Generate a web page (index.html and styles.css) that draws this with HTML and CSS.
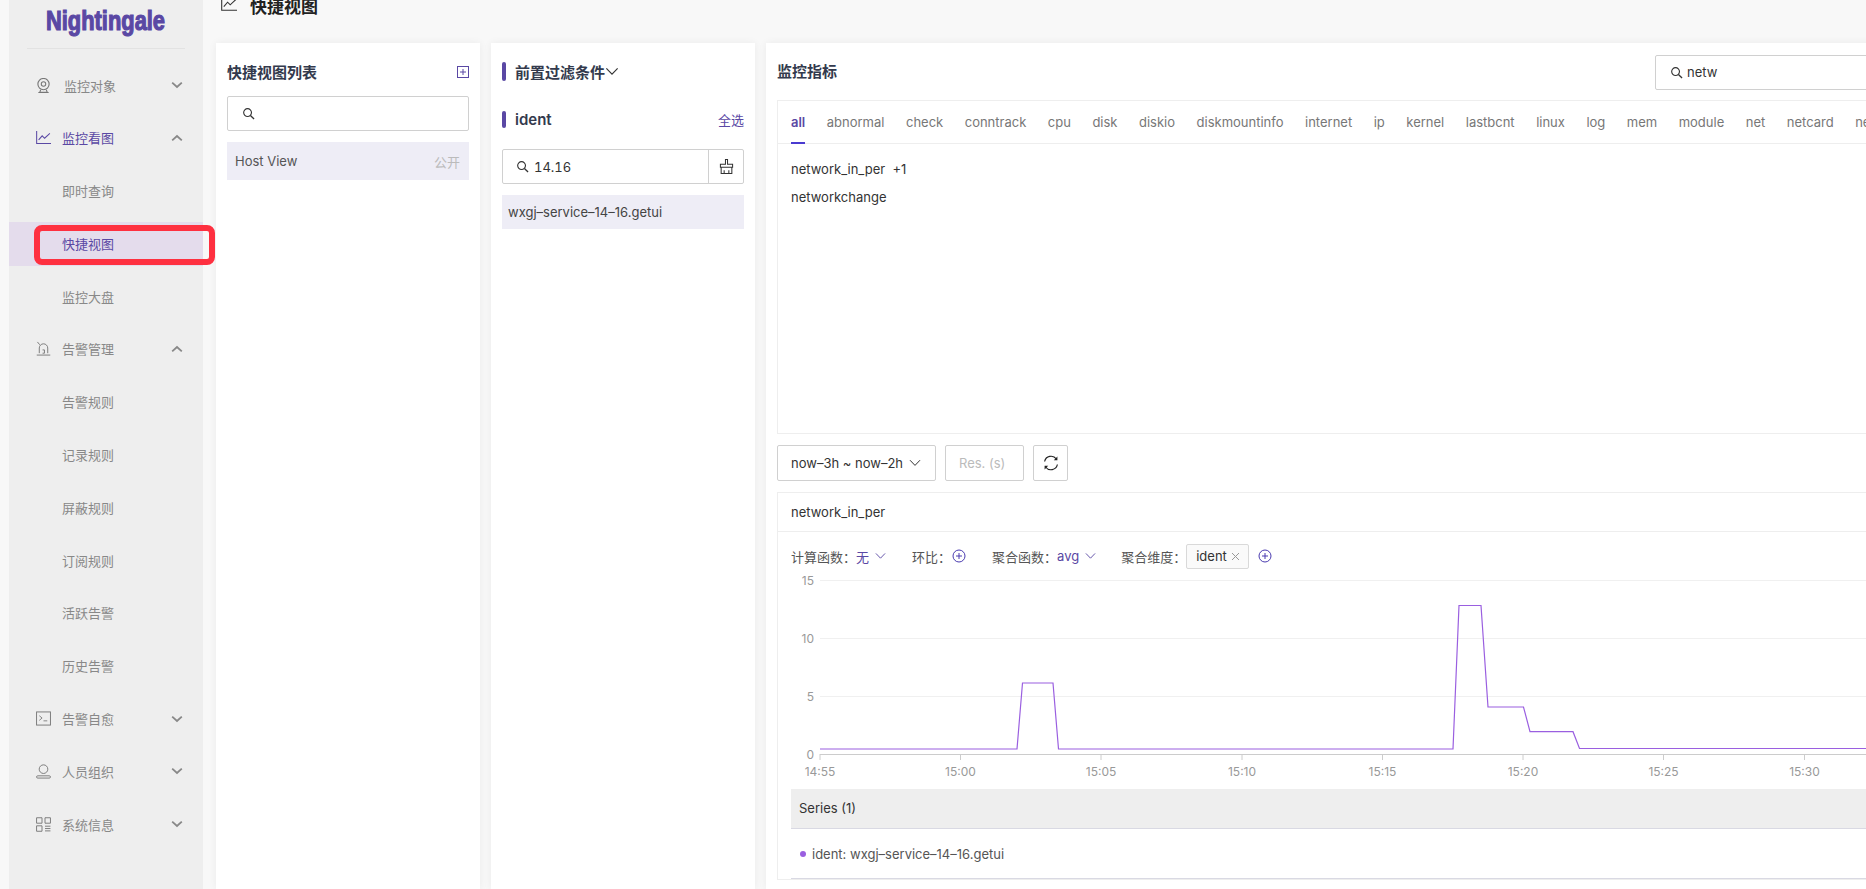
FILE: index.html
```html
<!DOCTYPE html>
<html lang="en">
<head>
    <meta charset="UTF-8">
    <meta name="viewport" content="width=device-width, initial-scale=1.0">
    <title>Nightingale</title>
    <link rel="stylesheet" href="styles.css">
</head>
<body>
    <svg class="sprites" width="0" height="0">
        <symbol id="i-search" viewBox="0 0 14 14"><circle cx="6" cy="6" r="4.2" fill="none" stroke="currentColor" stroke-width="1.2"/><path d="M9.1 9.1 13 13" fill="none" stroke="currentColor" stroke-width="1.4"/></symbol>
        <symbol id="i-down" viewBox="0 0 12 8"><path d="M1 1.2 6 6.4 11 1.2" fill="none" stroke="currentColor" stroke-width="1"/></symbol>
        <symbol id="i-fat-down" viewBox="0 0 12 8"><path d="M1.2 1.6 6 6 10.8 1.6" fill="none" stroke="currentColor" stroke-width="1.8"/></symbol>
        <symbol id="i-fat-up" viewBox="0 0 12 8"><path d="M1.2 6.4 6 2 10.8 6.4" fill="none" stroke="currentColor" stroke-width="1.8"/></symbol>
        <symbol id="i-plus" viewBox="0 0 14 14"><circle cx="7" cy="7" r="6" fill="none" stroke="currentColor"/><path d="M7 4v6M4 7h6" fill="none" stroke="currentColor"/></symbol>
        <symbol id="i-chart" viewBox="0 0 16 14"><path d="M.7 0v13.3H16M2.8 9.6 6.6 5.2l2.6 2.6 5.6-5.2" fill="none" stroke="currentColor" stroke-width="1.1"/></symbol>
    </svg>

    <aside class="sidebar">
        <div class="logo"><span class="logo-text">Nightingale</span></div>
        <nav class="nav">
            <div class="nav-item nav-first">
                <svg class="nav-icon" viewBox="0 0 16 16"><circle cx="8" cy="6.5" r="6" fill="none" stroke="currentColor" stroke-width="1.2"/><circle cx="8" cy="6.5" r="2.4" fill="none" stroke="currentColor" stroke-width="1.1"/><path d="M5 12.5 4 15.3h8L11 12.5M2.5 15.5h11" fill="none" stroke="currentColor" stroke-width="1.1"/></svg>
                <span class="nav-label">监控对象</span>
                <svg class="nav-arrow"><use href="#i-fat-down"/></svg>
            </div>
            <div class="nav-item nav-open">
                <svg class="nav-icon"><use href="#i-chart"/></svg>
                <span class="nav-label">监控看图</span>
                <svg class="nav-arrow"><use href="#i-fat-up"/></svg>
            </div>
            <div class="nav-item nav-sub">即时查询</div>
            <div class="nav-item nav-sub nav-active">快捷视图<div class="callout"></div></div>
            <div class="nav-item nav-sub">监控大盘</div>
            <div class="nav-item">
                <svg class="nav-icon" viewBox="0 0 16 16"><path d="M3.5 13V7.5a4.5 4.5 0 0 1 9 0V13M.8 15h14.4M7 9.5h2V13H7M1.5 1l2.5 3" fill="none" stroke="currentColor" stroke-width="1"/></svg>
                <span class="nav-label">告警管理</span>
                <svg class="nav-arrow"><use href="#i-fat-up"/></svg>
            </div>
            <div class="nav-item nav-sub">告警规则</div>
            <div class="nav-item nav-sub">记录规则</div>
            <div class="nav-item nav-sub">屏蔽规则</div>
            <div class="nav-item nav-sub">订阅规则</div>
            <div class="nav-item nav-sub">活跃告警</div>
            <div class="nav-item nav-sub">历史告警</div>
            <div class="nav-item">
                <svg class="nav-icon" viewBox="0 0 16 16"><rect x=".6" y="1" width="14.8" height="14" fill="none" stroke="currentColor" stroke-width="1"/><path d="M3.5 5 6.5 7.5 3.5 10M8 10.5h4" fill="none" stroke="currentColor" stroke-width=".9"/></svg>
                <span class="nav-label">告警自愈</span>
                <svg class="nav-arrow"><use href="#i-fat-down"/></svg>
            </div>
            <div class="nav-item">
                <svg class="nav-icon" viewBox="0 0 16 16"><circle cx="8" cy="5.5" r="4.6" fill="none" stroke="currentColor" stroke-width="1"/><rect x=".6" y="12.6" width="14.8" height="2.4" rx="1.2" fill="none" stroke="currentColor" stroke-width="1"/></svg>
                <span class="nav-label">人员组织</span>
                <svg class="nav-arrow"><use href="#i-fat-down"/></svg>
            </div>
            <div class="nav-item">
                <svg class="nav-icon" viewBox="0 0 16 16"><path d="M.6.8h5.8v5.8H.6zM9.6.8h5.8v5.8H9.6zM.6 9.4h5.8v5.8H.6zM9.6 9.8h5.8M9.6 12.3h5.8M9.6 14.8h5.8" fill="none" stroke="currentColor" stroke-width="1"/></svg>
                <span class="nav-label">系统信息</span>
                <svg class="nav-arrow"><use href="#i-fat-down"/></svg>
            </div>
        </nav>
    </aside>

    <main class="main">
        <div class="page-head">
            <svg class="page-icon"><use href="#i-chart"/></svg>
            <span class="page-title">快捷视图</span>
        </div>

        <div class="panels">
            <section class="panel panel-views">
                <div class="panel-head">
                    <span class="panel-title">快捷视图列表</span>
                    <svg class="add-icon" viewBox="0 0 12 12"><rect x=".5" y=".5" width="11" height="11" fill="none" stroke="currentColor"/><path d="M6 3v6M3 6h6" fill="none" stroke="currentColor"/></svg>
                </div>
                <div class="field">
                    <svg class="search-icon"><use href="#i-search"/></svg>
                </div>
                <div class="list-row list-row-view">
                    <span>Host View</span>
                    <span class="muted">公开</span>
                </div>
            </section>

            <section class="panel panel-filter">
                <div class="panel-head">
                    <span class="panel-title marked">前置过滤条件</span>
                    <svg class="title-arrow"><use href="#i-down"/></svg>
                </div>
                <div class="ident-head">
                    <span class="panel-title marked">ident</span>
                    <a class="link">全选</a>
                </div>
                <div class="field field-group">
                    <div class="field-main">
                        <svg class="search-icon"><use href="#i-search"/></svg>
                        <span class="num-text">14.16</span>
                    </div>
                    <div class="field-addon">
                        <svg class="brush-icon" viewBox="0 0 16 16"><path d="M6.9.6h2.2v5h5.4v3.2h-13V5.600h5.400zM2.300 8.800v6.600h11.400V8.800M5.500 12v3.400M10.500 12v3.400" fill="none" stroke="currentColor" stroke-width="1.100"/></svg>
                    </div>
                </div>
                <div class="list-row list-row-ident">wxgj–service–14–16.getui</div>
            </section>

            <section class="panel panel-metrics">
                <div class="metrics-head">
                    <span class="panel-title">监控指标</span>
                    <div class="field">
                        <svg class="search-icon"><use href="#i-search"/></svg>
                        <span>netw</span>
                    </div>
                </div>

                <div class="box metric-box">
                    <div class="tabs">
                        <span class="tab tab-active">all</span>
                        <span class="tab">abnormal</span>
                        <span class="tab">check</span>
                        <span class="tab">conntrack</span>
                        <span class="tab">cpu</span>
                        <span class="tab">disk</span>
                        <span class="tab">diskio</span>
                        <span class="tab">diskmountinfo</span>
                        <span class="tab">internet</span>
                        <span class="tab">ip</span>
                        <span class="tab">kernel</span>
                        <span class="tab">lastbcnt</span>
                        <span class="tab">linux</span>
                        <span class="tab">log</span>
                        <span class="tab">mem</span>
                        <span class="tab">module</span>
                        <span class="tab">net</span>
                        <span class="tab">netcard</span>
                        <span class="tab">netstat</span>
                    </div>
                    <ul class="metric-list">
                        <li>network_in_per &nbsp;+1</li>
                        <li>networkchange</li>
                    </ul>
                </div>

                <div class="toolbar">
                    <div class="btn btn-time">now–3h ~ now–2h<svg class="btn-arrow"><use href="#i-down"/></svg></div>
                    <div class="btn btn-res">Res. (s)</div>
                    <div class="btn btn-refresh">
                        <svg viewBox="0 0 16 16" width="16" height="16"><path d="M1.6 6.5A6.6 6.6 0 0 1 13.4 4M14.4 9.5A6.6 6.6 0 0 1 2.6 12" fill="none" stroke="#222" stroke-width="1.2"/><path d="M14.4 1.6v3.6h-3.6zM1.6 14.4v-3.6h3.6z" fill="#222"/></svg>
                    </div>
                </div>

                <div class="box graph-card">
                    <div class="graph-title">network_in_per</div>
                    <div class="graph-options">
                        <span class="opt-label">计算函数：</span><span class="opt-value">无</span><svg class="opt-arrow"><use href="#i-down"/></svg>
                        <span class="opt-label opt-ratio">环比：</span><svg class="opt-plus"><use href="#i-plus"/></svg>
                        <span class="opt-label opt-agg">聚合函数：</span><span class="opt-value">avg</span><svg class="opt-arrow"><use href="#i-down"/></svg>
                        <span class="opt-label opt-dim">聚合维度：</span>
                        <span class="tag">ident<svg class="tag-close" viewBox="0 0 9 9"><path d="M1 1 8 8M8 1 1 8" fill="none" stroke="currentColor"/></svg></span>
                        <svg class="opt-plus opt-plus-tag"><use href="#i-plus"/></svg>
                    </div>

                    <!-- origin of this svg is page x 778, y 572 -->
                    <svg class="chart" width="1188" height="217" viewBox="0 0 1188 217">
                        <g class="grid">
                            <path d="M42 8.5H1188M42 66.5H1188M42 124.5H1188"/>
                        </g>
                        <path class="axis" d="M42 182.5H1188M42 182v6M182.5 182v6M323 182v6M464 182v6M604.5 182v6M745 182v6M885.5 182v6M1026.5 182v6"/>
                        <path class="series-line" d="M42 177H239L244.5 111H275L280.5 177H675L681 33.5H703L710 135H745.5L752 159.7H795L801.5 176.5H1188"/>
                        <g class="y-labels">
                            <text x="36" y="12.5">15</text>
                            <text x="36" y="70.5">10</text>
                            <text x="36" y="128.5">5</text>
                            <text x="36" y="186.5">0</text>
                        </g>
                        <g class="x-labels">
                            <text x="42" y="204">14:55</text>
                            <text x="182.5" y="204">15:00</text>
                            <text x="323" y="204">15:05</text>
                            <text x="464" y="204">15:10</text>
                            <text x="604.5" y="204">15:15</text>
                            <text x="745" y="204">15:20</text>
                            <text x="885.5" y="204">15:25</text>
                            <text x="1026.5" y="204">15:30</text>
                        </g>
                    </svg>

                    <div class="series">
                        <div class="series-head">Series (1)</div>
                        <div class="series-row"><i class="dot"></i>ident: wxgj–service–14–16.getui</div>
                    </div>
                </div>
            </section>
        </div>
    </main>
</body>
</html>
```

FILE: styles.css
```css
* {
    box-sizing: border-box;
}
html, body {
    height: 100%;
}
body {
    margin: 0;
    display: flex;
    overflow: hidden;
    background-color: #f8f8f8;
    color: #333;
    font-family: Inter, "Noto Sans CJK SC", sans-serif;
    font-size: 13px;
}
.sprites {
    position: absolute;
}

/* sidebar */
.sidebar {
    flex: none;
    width: 194px;
    margin-left: 9px;
    background-color: #eee;
    position: relative;
    z-index: 2;
}
.logo {
    height: 49px;
    margin: 0 18px;
    padding-top: 7px;
    border-bottom: 1px solid #e2e2e2;
    font-family: "Liberation Sans", sans-serif;
    font-size: 27px;
    font-weight: 700;
    line-height: 28px;
    text-align: center;
    white-space: nowrap;
}
.logo-text {
    display: inline-block;
    color: #5a48a4;
    -webkit-text-stroke: 1.2px #5a48a4;
    transform: scaleX(0.81);
    margin-left: -2px;
}
.nav {
    display: flex;
    flex-direction: column;
    gap: 8.8px;
    padding-top: 14px;
}
.nav-item {
    position: relative;
    display: flex;
    align-items: center;
    height: 44px;
    padding-left: 27px;
    color: #888;
    flex: none;
}
.nav-icon {
    flex: none;
    width: 15px;
    height: 15px;
    margin-right: 11px;
    color: #777;
}
.nav-label {
    flex: 1;
}
.nav-first .nav-label {
    margin-left: 2px;
}
.nav-arrow {
    flex: none;
    width: 12px;
    height: 8px;
    margin-right: 20px;
    color: #888;
}
.nav-sub {
    padding-left: 53px;
}
.nav-open, .nav-open .nav-icon {
    color: #5a48a4;
}
.nav-active {
    margin-top: 1px;
    margin-bottom: -1px;
    padding-bottom: 2px;
    background-color: #e4dcec;
    color: #5a48a4;
}
.callout {
    position: absolute;
    left: 25px;
    top: 3px;
    width: 181px;
    height: 40px;
    border: 6px solid #fe3040;
    border-radius: 8px;
}

/* main column */
.main {
    flex: 1;
    min-width: 0;
}
.page-head {
    display: flex;
    align-items: center;
    height: 10px;
    margin-bottom: 33px;
    padding-left: 18px;
}
.page-icon {
    width: 16px;
    height: 14px;
    margin-top: -3px;
    margin-right: 13px;
    color: #333;
}
.page-title {
    color: #222;
    font-size: 17px;
    font-weight: 700;
}
.panels {
    display: flex;
    gap: 11px;
    height: 846px;
    padding-left: 13px;
}
.panel {
    flex: none;
    background: white;
    box-shadow: 0px 0px 8px rgba(0, 0, 0, 0.06);
}
.panel-views, .panel-filter {
    width: 264px;
    padding: 0 11px;
}
.panel-metrics {
    width: 1200px;
    padding: 0 11px;
}
.panel-head {
    display: flex;
    align-items: center;
    height: 53px;
    padding-top: 4px;
}
.panel-title {
    color: #333a4d;
    font-size: 15px;
    font-weight: 600;
}
.panel-views .panel-head {
    justify-content: space-between;
}
.add-icon {
    width: 12px;
    height: 12px;
    color: #5a48a4;
}
.marked {
    position: relative;
    padding-left: 13px;
}
.marked::before {
    content: "";
    position: absolute;
    left: 0;
    top: 1px;
    bottom: 1px;
    width: 4px;
    border-radius: 2px;
    background-color: #5a48a4;
}
.title-arrow {
    width: 14px;
    height: 9px;
    color: #333;
}
.ident-head {
    display: flex;
    align-items: center;
    justify-content: space-between;
    height: 46px;
    margin-bottom: 7px;
}
.link {
    color: #5a48a4;
    font-size: 13px;
}

.field {
    display: flex;
    align-items: center;
    height: 35px;
    padding-left: 14px;
    border: 1px solid #d0d0d0;
    border-radius: 2px;
    color: #333;
}
.search-icon {
    flex: none;
    width: 13px;
    height: 13px;
    margin-right: 5px;
    color: #333;
}
.field-group {
    padding: 0;
}
.field-main {
    flex: 1;
    display: flex;
    align-items: center;
    padding-left: 13px;
}
.num-text {
    font-variant-numeric: tabular-nums;
}
.field-addon {
    display: flex;
    align-items: center;
    justify-content: center;
    width: 35px;
    height: 100%;
    border-left: 1px solid #d0d0d0;
}
.brush-icon {
    width: 15px;
    height: 15px;
}
.list-row {
    margin-top: 11px;
    background-color: #eeedf6;
}
.list-row-view {
    display: flex;
    align-items: center;
    justify-content: space-between;
    height: 38px;
    padding: 0 9px 0 8px;
    color: #555;
}
.muted {
    color: #bbb;
}
.list-row-ident {
    display: flex;
    align-items: center;
    height: 34px;
    padding-left: 6px;
    color: #444;
}

/* metrics */
.metrics-head {
    display: flex;
    align-items: center;
    justify-content: space-between;
    height: 57px;
}
.metrics-head .panel-title {
    margin-top: -2px;
}
.metrics-head .field {
    width: 300px;
    margin-top: 1px;
}
.metrics-head .search-icon {
    margin-right: 4px;
}
.box {
    border: 1px solid #eee;
    border-right: none;
}
.metric-box {
    height: 334px;
}
.tabs {
    display: flex;
    gap: 21.5px;
    height: 43px;
    padding-left: 13px;
    border-bottom: 1px solid #eee;
    color: #777;
    white-space: nowrap;
}
.tab {
    position: relative;
    line-height: 42px;
}
.tab-active {
    color: #5a48a4;
    font-weight: 600;
}
.tab-active::after {
    content: "";
    position: absolute;
    left: 0;
    right: 0;
    bottom: -1px;
    height: 2px;
    background-color: #4a3bd0;
}
.metric-list {
    margin: 0;
    padding: 12px 0 0 13px;
    list-style: none;
}
.metric-list li {
    height: 27.5px;
    line-height: 27px;
}

.toolbar {
    display: flex;
    gap: 9px;
    margin: 11px 0;
}
.btn {
    display: flex;
    align-items: center;
    height: 36px;
    border: 1px solid #d0d0d0;
    border-radius: 2px;
}
.btn-time {
    width: 159px;
    padding-left: 13px;
}
.btn-arrow {
    width: 12px;
    height: 8px;
    margin-left: 6px;
    color: #333;
}
.btn-res {
    width: 79px;
    padding-left: 13px;
    color: #bbb;
}
.btn-refresh {
    justify-content: center;
    width: 35px;
}

.graph-title {
    height: 39px;
    padding-left: 13px;
    border-bottom: 1px solid #eee;
    line-height: 39px;
}
.graph-options {
    display: flex;
    align-items: center;
    height: 48px;
    padding: 0 0 0 13px;
    color: #555;
}
.opt-value {
    color: #5a48a4;
}
.opt-arrow {
    width: 11px;
    height: 8px;
    margin-left: 6px;
    color: #5a48a4;
}
.opt-ratio {
    margin-left: 26px;
}
.opt-agg {
    margin-left: 26px;
}
.opt-dim {
    margin-left: 25px;
}
.opt-plus {
    width: 14px;
    height: 14px;
    margin-left: 1px;
    color: #4a3bb0;
}
.opt-plus-tag {
    margin-left: 9px;
}
.tag {
    display: flex;
    align-items: center;
    height: 25px;
    padding: 0 8px 0 9px;
    border: 1px solid #d9d9d9;
    border-radius: 2px;
    background-color: #fafafa;
    color: #333;
}
.tag-close {
    width: 9px;
    height: 9px;
    margin-left: 4px;
    color: #999;
}
.chart {
    display: block;
    margin-top: -8px;
    font-size: 12px;
}
.grid path {
    fill: none;
    stroke: #f0f0f0;
}
.axis {
    fill: none;
    stroke: #ccc;
}
.series-line {
    fill: none;
    stroke: #9a5fe0;
    stroke-width: 1.2;
}
.y-labels text {
    fill: #999;
    text-anchor: end;
}
.x-labels text {
    fill: #999;
    text-anchor: middle;
}
.series {
    margin-left: 13px;
}
.series-head {
    height: 40px;
    padding-left: 8px;
    border-bottom: 1px solid #d9d9e3;
    background-color: #eee;
    line-height: 38px;
}
.series-row {
    display: flex;
    align-items: center;
    height: 50px;
    padding-left: 9px;
    border-bottom: 1px solid #d9d9e3;
    color: #555;
}
.dot {
    width: 6px;
    height: 6px;
    margin-right: 6px;
    border-radius: 50%;
    background-color: #9a5fe0;
}
```
